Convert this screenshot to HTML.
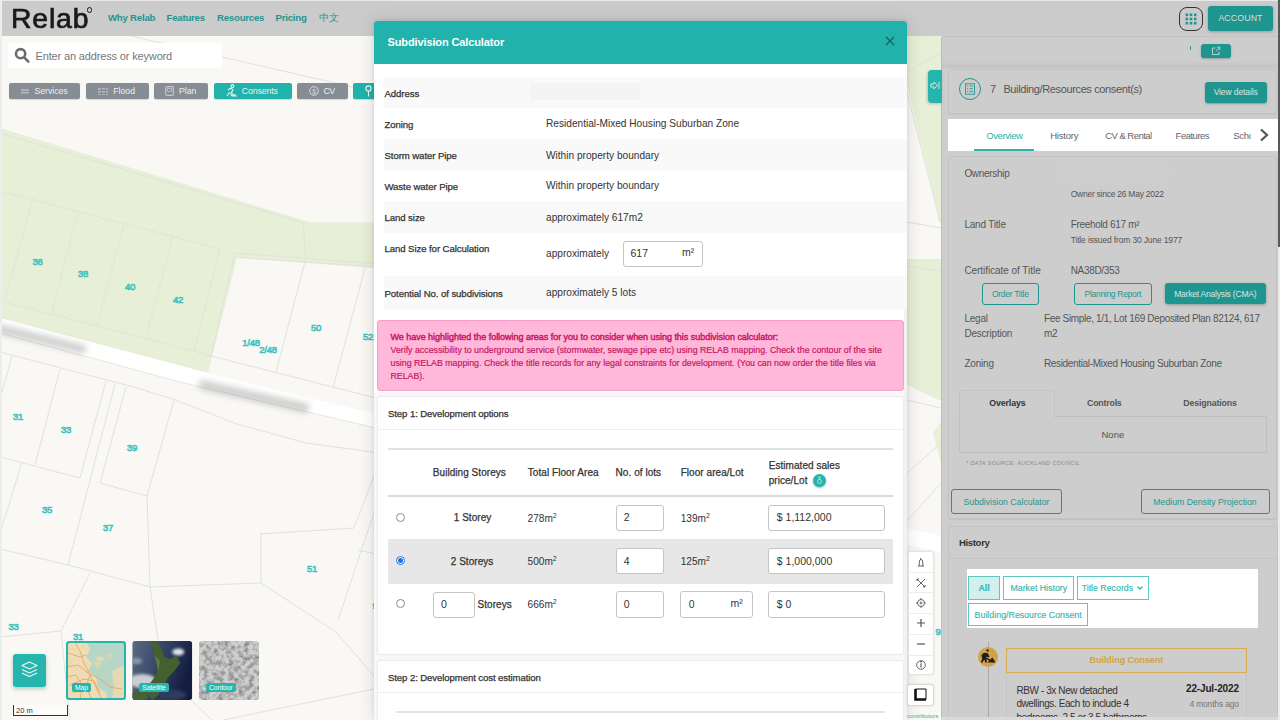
<!DOCTYPE html>
<html><head><meta charset="utf-8">
<style>
*{box-sizing:border-box}
html,body{margin:0;padding:0}
body{width:1280px;height:720px;overflow:hidden;position:relative;background:#f8f7f3;font-family:"Liberation Sans",sans-serif;color:#333}
.a{position:absolute}
.nw{white-space:nowrap}
.fbt{top:83px;height:16px;border-radius:2px;box-shadow:0 1px 1px rgba(0,0,0,0.15)}
.lb{left:384.5px;font-size:9.6px;line-height:13px;color:#333;-webkit-text-stroke:0.25px #333;letter-spacing:-0.08px}
.vl{left:546px;font-size:10.15px;line-height:13px;color:#333}
.vl sup{font-size:7px;vertical-align:0;position:relative;top:-4px}
.inp{background:#fff;border:1px solid #c4c4c4;border-radius:3px}
.card{left:376.5px;width:527px;background:#fff;border:1px solid #ececec;border-radius:3px;box-shadow:0 0 2px rgba(0,0,0,0.06)}
.hd{left:388px;font-size:9.6px;line-height:13px;color:#333;-webkit-text-stroke:0.25px #333;letter-spacing:-0.1px}
.th{font-size:10px;line-height:13px;color:#333;-webkit-text-stroke:0.25px #333;letter-spacing:0.05px}
.rd{left:396px;width:9px;height:9px;border:1px solid #8a8a8a;border-radius:50%;background:#fff}
.tb{top:129px;font-size:9.5px;line-height:13px;color:#666}
.pl{left:964.4px;font-size:10px;line-height:13px;color:#555}
.ps{font-size:8.5px;line-height:12px;color:#555}
.ob{border:1.5px solid #1e968f;border-radius:3px;color:#1e968f;font-size:8px;text-align:center;display:flex;align-items:center;justify-content:center}
.hb{border:1px solid #5fc7c0;color:#3ab5ad;font-size:8.8px;-webkit-text-stroke:0.15px #3ab5ad;text-align:center;display:flex;align-items:center;justify-content:center}
.ml{font-size:9.5px;line-height:10px;color:#c8f0ee;-webkit-text-stroke:0.7px #3cc1bf;transform:translate(-50%,-50%);letter-spacing:-0.3px}
.tl{top:682.5px;height:9.5px;background:#26b5ad;border-radius:2px;color:#fff;font-size:6.8px;line-height:9.5px;text-align:center;letter-spacing:-0.1px}
.fbx{top:84px;font-size:8.7px;line-height:14px;color:#eef0f0}
</style></head><body>

<!-- MAP -->
<svg class="a" style="left:0;top:0" width="1280" height="720" viewBox="0 0 1280 720">
  <rect x="0" y="0" width="1280" height="720" fill="#f9f8f4"/>
  <!-- green area -->
  <polygon points="0,128 311,222.5 600,222.5 600,286 237,257.5 208,373 0,318" fill="#e7efd6"/>
  <polygon points="900,36 945,36 945,222 940,222 907,85 900,70" fill="#e7efd6"/>
  <polygon points="900,259 945,259 945,401 907,384 900,382" fill="#e7efd6"/>
  <polygon points="940,423 933,433 945,478 945,420" fill="#e9f0d6"/>
  <g stroke="#e1e2dc" stroke-width="1" fill="none">
    <line x1="907" y1="72" x2="941" y2="53"/>
    <line x1="907" y1="92" x2="940" y2="222"/>
    <line x1="907" y1="222" x2="941" y2="228"/>
    <line x1="907" y1="266" x2="941" y2="271"/>
    <line x1="907" y1="384" x2="941" y2="400"/>
    <line x1="907" y1="473" x2="941" y2="443"/>
    <line x1="907" y1="521" x2="941" y2="483"/>
    <line x1="907" y1="400" x2="941" y2="408"/>
  </g>
  <g stroke="#e1e2dc" stroke-width="1" fill="none">
    <polyline points="0,133 303,222.5 306,258 276,372"/>
    <polyline points="0,191 220,249 194,351"/>
    <polyline points="0,301 194,351 211,356 380,399"/>
    <line x1="33" y1="198" x2="5" y2="299"/>
    <line x1="78" y1="211" x2="52" y2="313"/>
    <line x1="124" y1="224" x2="97" y2="325"/>
    <line x1="173" y1="237" x2="146" y2="337"/>
    <polyline points="237,257.5 380,267"/>
    <polyline points="235,253 380,264"/>
    <line x1="235" y1="253" x2="211" y2="356"/>
    <line x1="365" y1="268" x2="333" y2="388"/>
    <line x1="131" y1="36" x2="374" y2="92"/>
    <!-- below road -->
    <polyline points="0,352 130,386 173,399 237,424 306,443 380,453"/>
    <line x1="12" y1="356" x2="0" y2="400"/>
    <line x1="60" y1="369" x2="35" y2="465"/>
    <line x1="106" y1="381" x2="80" y2="478"/>
    <line x1="115" y1="384" x2="68" y2="565"/>
    <line x1="126" y1="387" x2="100" y2="483"/>
    <polyline points="174,400 147,496 150,587 158,640"/>
    <polyline points="0,457 80,478"/>
    <polyline points="100,483 147,496"/>
    <line x1="22" y1="462" x2="0" y2="534"/>
    <polyline points="0,549 68,565 150,587 261,583 336,632 374,676"/>
    <polyline points="90,573 61,631 70,720"/>
    <line x1="0" y1="637" x2="61" y2="631"/>
    <polyline points="260,534 354,528 380,460"/>
    <line x1="261" y1="534" x2="261" y2="583"/>
        <line x1="358" y1="550" x2="380" y2="555"/>
    <line x1="380" y1="495" x2="338" y2="620"/>
    <line x1="191" y1="700" x2="212" y2="720"/>
    <line x1="223" y1="720" x2="374" y2="689"/>
  </g>
  <!-- road -->
  <polygon points="0,318 208,373 380,415 960,540 960,556 380,429 180,382 0,333" fill="#ffffff"/>
  <polyline points="0,333 180,382 380,429" fill="none" stroke="#e6e6e1" stroke-width="1"/>
  <g fill="none" stroke="rgba(60,60,60,0.26)" stroke-width="9" stroke-linecap="round" style="filter:blur(3px)">
    <line x1="0" y1="329" x2="82" y2="349"/>
    <line x1="203" y1="385" x2="305" y2="408"/>
  </g>
</svg>

<!-- MAP LABELS -->
<div class="a nw ml" style="left:37.5px;top:262px">36</div>
<div class="a nw ml" style="left:83px;top:274px">38</div>
<div class="a nw ml" style="left:130px;top:286.5px">40</div>
<div class="a nw ml" style="left:178px;top:299.5px">42</div>
<div class="a nw ml" style="left:251px;top:343px">1/48</div>
<div class="a nw ml" style="left:268px;top:350px">2/48</div>
<div class="a nw ml" style="left:316px;top:328px">50</div>
<div class="a nw ml" style="left:368px;top:337px">52</div>
<div class="a nw ml" style="left:18px;top:416.5px">31</div>
<div class="a nw ml" style="left:66px;top:429.5px">33</div>
<div class="a nw ml" style="left:132px;top:447.5px">39</div>
<div class="a nw ml" style="left:47px;top:510px">35</div>
<div class="a nw ml" style="left:108px;top:528px">37</div>
<div class="a nw ml" style="left:312px;top:568.5px">51</div>
<div class="a nw ml" style="left:13.5px;top:626.5px">33</div>
<div class="a nw ml" style="left:78px;top:636.5px">31</div>
<div class="a nw ml" style="left:375px;top:606px">9</div>
<div class="a nw ml" style="left:938px;top:632px">9</div>

<!-- MAP WIDGETS -->
<div class="a" style="left:13px;top:653.5px;width:33px;height:33px;background:#26b5ad;border-radius:3px;box-shadow:0 2px 4px rgba(0,100,100,0.3)"></div>
<svg class="a" style="left:20px;top:660px" width="19" height="19" fill="none" stroke="#e9f7f6" stroke-width="1.2" stroke-linejoin="round"><path d="M9.5 2 L17 5.5 L9.5 9 L2 5.5 Z"/><path d="M2 9.5 L9.5 13 L17 9.5"/><path d="M2 13 L9.5 16.5 L17 13"/></svg>

<svg class="a" style="left:66px;top:640.5px" width="60" height="59" viewBox="0 0 60 59">
 <defs><clipPath id="c1"><rect x="0" y="0" width="60" height="59" rx="3"/></clipPath></defs>
 <g clip-path="url(#c1)">
 <rect width="60" height="59" fill="#b8d6c6"/>
 <path d="M0 0 H20 L24 8 L20 16 L26 22 L22 30 L30 36 L32 46 L40 52 L42 59 H0 Z" fill="#eddcb6"/>
 <path d="M46 30 L60 24 V59 H46 L48 46 Z" fill="#e8d9b2"/>
 <path d="M26 20 L36 22 L32 28 Z M40 14 L46 12 L44 18 Z" fill="#ddd6ae"/>
 <ellipse cx="34" cy="18" rx="4" ry="2.5" fill="#e6d7b0"/>
 <g stroke="#e9a05e" stroke-width="0.9" fill="none" opacity="0.9">
  <path d="M8 0 L14 10 L18 22 L24 34 L30 46 L36 59"/>
  <path d="M0 26 L12 24 L22 32 L34 38 L44 46 L56 48"/>
  <path d="M4 44 L18 38 L28 40 L34 52"/>
  <path d="M2 12 L14 16 L20 14"/>
  <path d="M0 36 L10 34 L16 44 L14 59"/>
  <path d="M24 34 L20 46 L26 59"/>
 </g>
 <g stroke="#f3cf8a" stroke-width="0.7" fill="none">
  <path d="M0 6 L8 8 M4 20 L12 30 M6 52 L20 50 M22 10 L16 4 M46 50 L52 40"/>
 </g>
 </g>
 <rect x="1" y="1" width="58" height="57" rx="2.5" fill="none" stroke="#26b5ad" stroke-width="2"/>
</svg>
<svg class="a" style="left:132px;top:640.5px" width="60.5" height="59" viewBox="0 0 60 59">
 <defs><clipPath id="c2"><rect x="0" y="0" width="60" height="59" rx="3"/></clipPath>
 <linearGradient id="g2" x1="0" y1="0" x2="1" y2="0.3"><stop offset="0" stop-color="#5b6b84"/><stop offset="0.45" stop-color="#39496a"/><stop offset="1" stop-color="#141d3f"/></linearGradient>
 <filter id="bl2"><feGaussianBlur stdDeviation="1.6"/></filter></defs>
 <g clip-path="url(#c2)">
 <rect width="60" height="59" fill="url(#g2)"/>
 <g filter="url(#bl2)">
 <ellipse cx="10" cy="40" rx="14" ry="7" fill="#c9cdd4"/>
 <ellipse cx="4" cy="20" rx="6" ry="3" fill="#8c98aa"/>
 <ellipse cx="46" cy="11" rx="6" ry="3.5" fill="#e3e6ea"/>
 <ellipse cx="40" cy="54" rx="14" ry="5" fill="#2f3d5e"/>
 </g>
 <path d="M18 0 L26 2 L30 10 L32 16 L38 18 L44 14 L48 22 L42 30 L36 36 L32 44 L26 54 L20 59 L14 52 L18 42 L24 34 L26 24 L22 12 Z" fill="#44602f"/>
 <path d="M0 52 L12 48 L16 56 L12 59 H0 Z" fill="#4a6233"/>
 <path d="M22 14 L28 20 L26 30 Z" fill="#5a7a3a"/>
 </g>
</svg>
<svg class="a" style="left:199px;top:640.5px" width="60" height="59" viewBox="0 0 60 59">
 <defs><clipPath id="c3"><rect x="0" y="0" width="60" height="59" rx="3"/></clipPath>
 <filter id="nz" x="0" y="0" width="100%" height="100%"><feTurbulence type="fractalNoise" baseFrequency="0.2" numOctaves="4" seed="7"/><feColorMatrix type="matrix" values="0 0 0 0 0  0 0 0 0 0  0 0 0 0 0  -2.2 0 0 0 1.35"/></filter></defs>
 <g clip-path="url(#c3)"><rect width="60" height="59" fill="#cfcfcf"/><rect width="60" height="59" filter="url(#nz)" fill="#000" opacity="0.4"/></g>
</svg>
<div class="a nw tl" style="left:72px;width:19px">Map</div>
<div class="a nw tl" style="left:139px;width:30px">Satellite</div>
<div class="a nw tl" style="left:205.6px;width:30.4px">Contour</div>
<div class="a" style="left:12.5px;top:705px;width:55px;height:11px;border:1px solid #333;border-top:none;background:rgba(255,255,255,0.5)"></div>
<div class="a nw" style="left:16px;top:706px;font-size:7.5px;line-height:9px;color:#333">20 m</div>

<!-- HEADER -->
<div class="a" style="left:0;top:0;width:1280px;height:36px;background:#cbcbcb;border-top:1px solid #e9e9e9;border-left:2px solid #e9e9e9"></div>
<div class="a nw" style="left:11px;top:2.5px;font-size:27px;line-height:32px;color:#1a1a1a;letter-spacing:0.8px;transform:scaleX(1.05);transform-origin:0 0;-webkit-text-stroke:0.7px #1a1a1a">Relab</div>
<div class="a" style="left:86.5px;top:7px;width:5.5px;height:5.5px;border:1.2px solid #1a1a1a;border-radius:50%"></div>
<div class="a nw" style="left:108px;top:11px;font-size:9.6px;line-height:14px;font-weight:bold;color:#1f958f;letter-spacing:-0.2px">Why Relab</div>
<div class="a nw" style="left:166.5px;top:11px;font-size:9.6px;line-height:14px;font-weight:bold;color:#1f958f;letter-spacing:-0.2px">Features</div>
<div class="a nw" style="left:217px;top:11px;font-size:9.6px;line-height:14px;font-weight:bold;color:#1f958f;letter-spacing:-0.2px">Resources</div>
<div class="a nw" style="left:275.5px;top:11px;font-size:9.6px;line-height:14px;font-weight:bold;color:#1f958f;letter-spacing:-0.2px">Pricing</div>
<div class="a nw" style="left:318.5px;top:11px;font-size:9.6px;line-height:14px;color:#1f958f">中文</div>
<div class="a" style="left:1179px;top:7px;width:24px;height:24px;border:1px solid #333;border-radius:8px"></div>
<svg class="a" style="left:1185px;top:13px" width="12" height="12" viewBox="0 0 12 12" fill="#1e968f">
 <rect x="0.5" y="0.5" width="2.6" height="2.6"/><rect x="4.7" y="0.5" width="2.6" height="2.6"/><rect x="8.9" y="0.5" width="2.6" height="2.6"/>
 <rect x="0.5" y="4.7" width="2.6" height="2.6"/><rect x="4.7" y="4.7" width="2.6" height="2.6"/><rect x="8.9" y="4.7" width="2.6" height="2.6"/>
 <rect x="0.5" y="8.9" width="2.6" height="2.6"/><rect x="4.7" y="8.9" width="2.6" height="2.6"/><rect x="8.9" y="8.9" width="2.6" height="2.6"/>
</svg>
<div class="a nw" style="left:1208px;top:6px;width:65px;height:25px;background:#1e968f;border-radius:3px;box-shadow:0 1px 3px rgba(0,60,60,0.3);color:#d9dddd;font-size:8.8px;line-height:25px;text-align:center;letter-spacing:0.1px">ACCOUNT</div>

<!-- SEARCH -->
<div class="a" style="left:8px;top:43px;width:214px;height:25px;background:#fff;border-radius:2px"></div>
<svg class="a" style="left:14px;top:47px" width="17" height="17" viewBox="0 0 17 17"><circle cx="6.6" cy="6.7" r="4.6" fill="none" stroke="#6c6c6c" stroke-width="2.6"/><line x1="10.2" y1="10.4" x2="14.3" y2="14.6" stroke="#6c6c6c" stroke-width="2.6" stroke-linecap="round"/></svg>
<div class="a nw" style="left:35.5px;top:49px;font-size:11px;line-height:14px;color:#777;letter-spacing:-0.15px">Enter an address or keyword</div>

<!-- FILTER BUTTONS -->
<div class="a fbt" style="left:9px;width:71px;background:#878d94"></div>
<svg class="a" style="left:21px;top:89px" width="8" height="5"><rect x="0" y="0.3" width="8" height="1.5" fill="#b9bdc1"/><rect x="0" y="3" width="8" height="1.5" fill="#b9bdc1"/></svg>
<div class="a nw fbx" style="left:34.4px">Services</div>
<div class="a fbt" style="left:85.5px;width:63px;background:#878d94"></div>
<svg class="a" style="left:98px;top:87.5px" width="10" height="7" fill="#b9bdc1" opacity="0.9"><rect x="0" y="0" width="11" height="1.6"/><rect x="0" y="3" width="11" height="1.6"/><rect x="0" y="6" width="11" height="1.6"/><rect x="3" y="0" width="1" height="8" fill="#878d94"/><rect x="7" y="0" width="1" height="8" fill="#878d94"/></svg>
<div class="a nw fbx" style="left:113.3px">Flood</div>
<div class="a fbt" style="left:154px;width:54px;background:#878d94"></div>
<svg class="a" style="left:165px;top:86px" width="9" height="10"><rect x="0.6" y="0.6" width="7.8" height="8.8" rx="1.5" fill="none" stroke="#c5c8cb" stroke-width="1.1"/><rect x="2.6" y="2.4" width="3.8" height="3" fill="none" stroke="#c5c8cb" stroke-width="0.8"/></svg>
<div class="a nw fbx" style="left:179px">Plan</div>
<div class="a fbt" style="left:214px;width:78px;background:#22b2ac"></div>
<svg class="a" style="left:226px;top:84px" width="11" height="13" fill="none" stroke="#e8f6f5" stroke-width="1.1"><circle cx="6.5" cy="2" r="1.4"/><path d="M2 6 l3-2 l2 2 l-2 3 M1 12 l2-3 h3 l2 3 M5 10 a2 2 0 1 0 4 0 M8 12 h3"/></svg>
<div class="a nw fbx" style="left:241.8px;letter-spacing:-0.1px">Consents</div>
<div class="a fbt" style="left:297px;width:51px;background:#878d94"></div>
<svg class="a" style="left:309px;top:86px" width="10" height="10"><circle cx="5" cy="5" r="4.3" fill="none" stroke="#d9dadb" stroke-width="1"/><text x="5" y="7.6" font-size="6.5" text-anchor="middle" fill="#d9dadb" font-family="Liberation Sans">$</text></svg>
<div class="a nw fbx" style="left:323.5px;letter-spacing:-0.5px">CV</div>
<div class="a fbt" style="left:353px;width:40px;background:#22b2ac"></div>
<svg class="a" style="left:365px;top:85px" width="7" height="12" fill="none" stroke="#e8f6f5" stroke-width="1.1"><circle cx="3.5" cy="3.5" r="2.6"/><line x1="3.5" y1="6.1" x2="3.5" y2="11.5"/></svg>

<div class="a" style="left:0;top:0;width:2px;height:720px;background:#eceeee"></div>
<!-- MODAL -->
<div class="a" style="left:374px;top:21px;width:533px;height:699px;background:#fff;border-radius:3px 3px 0 0;box-shadow:0 0 4px rgba(0,0,0,0.1),0 0 18px rgba(0,0,0,0.12)"></div>
<div class="a" style="left:374px;top:21px;width:533px;height:43px;background:#22b2ac;border-radius:3px 3px 0 0"></div>
<div class="a nw" style="left:387.5px;top:35px;font-size:11px;line-height:14px;font-weight:bold;color:#fff;letter-spacing:-0.12px">Subdivision Calculator</div>
<svg class="a" style="left:884.5px;top:36px" width="10" height="10"><path d="M1 1 L9 9 M9 1 L1 9" stroke="#1d5a56" stroke-width="1.1"/></svg>

<!-- info rows -->
<div class="a" style="left:384px;top:77px;width:523px;height:31px;background:#f9f9f9"></div>
<div class="a" style="left:530px;top:83px;width:110px;height:17px;background:#f4f4f4;border-radius:2px"></div>
<div class="a" style="left:384px;top:139px;width:523px;height:31px;background:#f9f9f9"></div>
<div class="a" style="left:384px;top:201px;width:523px;height:32px;background:#f9f9f9"></div>
<div class="a" style="left:384px;top:276px;width:523px;height:34px;background:#f9f9f9"></div>
<div class="a nw lb" style="top:87px">Address</div>
<div class="a nw lb" style="top:118px">Zoning</div>
<div class="a nw lb" style="top:149px">Storm water Pipe</div>
<div class="a nw lb" style="top:180px">Waste water Pipe</div>
<div class="a nw lb" style="top:211px">Land size</div>
<div class="a nw lb" style="top:242px">Land Size for Calculation</div>
<div class="a nw lb" style="top:287px">Potential No. of subdivisions</div>
<div class="a nw vl" style="top:117px">Residential-Mixed Housing Suburban Zone</div>
<div class="a nw vl" style="top:148.5px">Within property boundary</div>
<div class="a nw vl" style="top:179px">Within property boundary</div>
<div class="a nw vl" style="top:210.5px">approximately 617m2</div>
<div class="a nw vl" style="top:247px">approximately</div>
<div class="a inp" style="left:623px;top:241px;width:80px;height:26px"></div>
<div class="a nw vl" style="left:630.5px;top:247px;font-size:10.5px">617</div>
<div class="a nw vl" style="left:682px;top:246px;font-size:10.5px">m²</div>
<div class="a nw vl" style="top:286px">approximately 5 lots</div>

<!-- warning -->
<div class="a" style="left:376.5px;top:319.5px;width:527.5px;height:71px;background:#ffb8da;border:1px solid #f79dc7;border-radius:3px"></div>
<div class="a nw" style="left:390.5px;top:330.5px;font-size:8.8px;line-height:13px;color:#c8155f;-webkit-text-stroke:0.18px #c8155f">
<div style="font-size:9px;-webkit-text-stroke:0.42px #c8155f;letter-spacing:-0.03px">We have highlighted the following areas for you to consider when using this subdivision calculator:</div>
<div>Verify accessibility to underground service (stormwater, sewage pipe etc) using RELAB mapping. Check the contour of the site</div>
<div>using RELAB mapping. Check the title records for any legal constraints for development. (You can now order the title files via</div>
<div>RELAB).</div>
</div>

<!-- step 1 card -->
<div class="a" style="left:374px;top:392px;width:530px;height:328px;background:#f7f8f8"></div>
<div class="a card" style="top:396px;height:259px"></div>
<div class="a" style="left:377.5px;top:429px;width:525.5px;height:1px;background:#eeeeee"></div>
<div class="a nw hd" style="top:407px">Step 1: Development options</div>
<div class="a" style="left:388px;top:448px;width:505px;height:2px;background:#dde2e2"></div>
<div class="a" style="left:388px;top:495px;width:505px;height:2px;background:#d6dcdc"></div>
<div class="a nw th" style="left:432.8px;top:466px">Building Storeys</div>
<div class="a nw th" style="left:527.8px;top:466px">Total Floor Area</div>
<div class="a nw th" style="left:615.6px;top:466px">No. of lots</div>
<div class="a nw th" style="left:680.7px;top:466px">Floor area/Lot</div>
<div class="a nw th" style="left:768.7px;top:458.5px">Estimated sales</div>
<div class="a nw th" style="left:768.7px;top:473.5px">price/Lot</div>
<div class="a" style="left:813px;top:473.5px;width:13px;height:13px;border-radius:50%;background:#26b5ad;box-shadow:0 1px 2px rgba(0,80,80,0.4)"></div>
<svg class="a" style="left:816px;top:476px" width="7" height="8" fill="none" stroke="#bfe9e6" stroke-width="0.8"><circle cx="3.5" cy="1.5" r="0.9"/><rect x="1.8" y="3.5" width="3.4" height="3.8" rx="1"/></svg>

<div class="a" style="left:388px;top:539px;width:505px;height:44.5px;background:#e7e7e7"></div>
<div class="a rd" style="top:512.5px"></div>
<div class="a rd" style="top:556px;border-color:#1a73e8"><div style="position:absolute;left:1.1px;top:1.1px;width:5px;height:5px;border-radius:50%;background:#1a6ff0"></div></div>
<div class="a rd" style="top:599px"></div>

<div class="a nw th" style="left:453.7px;top:511px">1 Storey</div>
<div class="a nw th" style="left:450.7px;top:554.5px">2 Storeys</div>
<div class="a inp" style="left:433px;top:591.5px;width:41.5px;height:26px"></div>
<div class="a nw vl" style="left:441px;top:597.5px;font-size:10.5px">0</div>
<div class="a nw th" style="left:477.5px;top:598px">Storeys</div>

<div class="a nw vl" style="left:527.5px;top:511.5px">278m<sup>2</sup></div>
<div class="a nw vl" style="left:527.5px;top:555px">500m<sup>2</sup></div>
<div class="a nw vl" style="left:527.5px;top:598px">666m<sup>2</sup></div>

<div class="a inp" style="left:615.7px;top:504.7px;width:48.5px;height:26.6px"></div>
<div class="a inp" style="left:615.7px;top:548.3px;width:48.5px;height:26.1px"></div>
<div class="a inp" style="left:615.7px;top:591.4px;width:48.5px;height:26.6px"></div>
<div class="a nw vl" style="left:623.7px;top:511px;font-size:10.5px">2</div>
<div class="a nw vl" style="left:623.7px;top:554.5px;font-size:10.5px">4</div>
<div class="a nw vl" style="left:623.7px;top:597.5px;font-size:10.5px">0</div>

<div class="a nw vl" style="left:680.7px;top:511.5px">139m<sup>2</sup></div>
<div class="a nw vl" style="left:680.7px;top:555px">125m<sup>2</sup></div>
<div class="a inp" style="left:680.4px;top:591.4px;width:72.2px;height:26.6px"></div>
<div class="a nw vl" style="left:688.7px;top:597.5px;font-size:10.5px">0</div>
<div class="a nw vl" style="left:730.5px;top:597px;font-size:10.5px">m²</div>

<div class="a inp" style="left:768.3px;top:504.7px;width:116.3px;height:26.6px"></div>
<div class="a inp" style="left:768.3px;top:548.3px;width:116.3px;height:26.1px"></div>
<div class="a inp" style="left:768.3px;top:591.4px;width:116.3px;height:26.6px"></div>
<div class="a nw vl" style="left:776.8px;top:511px;font-size:10.5px">$ 1,112,000</div>
<div class="a nw vl" style="left:776.8px;top:554.5px;font-size:10.5px">$ 1,000,000</div>
<div class="a nw vl" style="left:776.8px;top:597.5px;font-size:10.5px">$ 0</div>

<!-- step 2 card -->
<div class="a card" style="top:660px;height:70px"></div>
<div class="a" style="left:377.5px;top:692px;width:525.5px;height:1px;background:#eeeeee"></div>
<div class="a nw hd" style="top:670.5px">Step 2: Development cost estimation</div>
<div class="a" style="left:396px;top:711px;width:489px;height:2px;background:#e2e6e6"></div>
<div class="a" style="left:904px;top:310px;width:3px;height:410px;background:#f1f2f2"></div>

<!-- RIGHT PANEL -->
<div class="a" style="left:941px;top:36px;width:339px;height:684px;background:#cdcdcd;border-left:1px solid #bdbdbd;border-top:1px solid #c2c2c2;border-radius:3px 0 0 0"></div>
<div class="a" style="left:942px;top:60px;width:336px;height:8px;background:linear-gradient(rgba(0,0,0,0),rgba(0,0,0,0.05))"></div>
<div class="a" style="left:1190px;top:46px;width:1px;height:4px;background:#2a9c96"></div>
<div class="a" style="left:1201px;top:44px;width:30px;height:13.5px;background:#1e968f;border-radius:3px;box-shadow:0 1px 2px rgba(0,60,60,0.3)"></div>
<svg class="a" style="left:1211px;top:45.5px" width="10" height="10" fill="none" stroke="#b9dcda" stroke-width="0.9"><path d="M4.5 2 H1.5 V8.5 H8 V5.5 M5 5 L8.8 1.2 M6 1.2 H8.8 V4"/></svg>

<!-- consents card -->
<div class="a" style="left:948px;top:68.5px;width:329px;height:45.5px;border:1px solid #c3c3c3;border-radius:3px;box-shadow:0 1px 1px rgba(0,0,0,0.05)"></div>
<div class="a" style="left:959px;top:78px;width:22px;height:22px;border:1.8px solid #1e968f;border-radius:50%"></div>
<svg class="a" style="left:964px;top:83px" width="12" height="12" fill="none" stroke="#1e968f" stroke-width="0.9"><rect x="1.5" y="0.8" width="9" height="10.4"/><path d="M3 3 h1.2 M5.5 3 h3.5 M3 5.8 h1.2 M5.5 5.8 h3.5 M3 8.6 h1.2 M5.5 8.6 h3.5"/></svg>
<div class="a nw" style="left:990px;top:81.5px;font-size:11px;line-height:14px;color:#555">7</div>
<div class="a nw" style="left:1003.4px;top:81.5px;font-size:11px;line-height:14px;color:#555;letter-spacing:-0.37px">Building/Resources consent(s)</div>
<div class="a nw" style="left:1204.6px;top:82.3px;width:62px;height:21px;background:#1e968f;border-radius:3px;box-shadow:0 1px 2px rgba(0,60,60,0.35);color:#d5e6e5;font-size:8.6px;line-height:21px;text-align:center;letter-spacing:-0.15px">View details</div>

<!-- tabs -->
<div class="a" style="left:948px;top:118.7px;width:330px;height:32.3px;background:#fff"></div>
<div class="a nw tb" style="left:986.2px;color:#2ab3ab;letter-spacing:-0.4px">Overview</div>
<div class="a nw tb" style="left:1050.2px;letter-spacing:-0.2px">History</div>
<div class="a nw tb" style="left:1105.3px;letter-spacing:-0.55px">CV &amp; Rental</div>
<div class="a nw tb" style="left:1175.6px;letter-spacing:-0.5px">Features</div>
<div class="a nw tb" style="left:1233.2px;width:18px;overflow:hidden;letter-spacing:-0.3px">School</div>
<svg class="a" style="left:1259px;top:128px" width="10" height="14" fill="none" stroke="#555" stroke-width="2.2"><path d="M2 1.5 L8 7 L2 12.5"/></svg>
<div class="a" style="left:974px;top:149px;width:60.4px;height:2px;background:#2ab3ab"></div>

<!-- overview card -->
<div class="a" style="left:948px;top:155.6px;width:329px;height:363px;border:1px solid #c3c3c3;border-radius:3px;box-shadow:0 1px 1px rgba(0,0,0,0.06)"></div>
<div class="a" style="left:1058px;top:165px;width:112px;height:15px;background:#cecece"></div>
<div class="a nw pl" style="top:166.5px;letter-spacing:-0.3px">Ownership</div>
<div class="a nw pl" style="top:217.5px;letter-spacing:-0.2px">Land Title</div>
<div class="a nw pl" style="top:263.5px;letter-spacing:-0.05px">Certificate of Title</div>
<div class="a nw pl" style="top:312px;letter-spacing:-0.2px">Legal</div>
<div class="a nw pl" style="top:326.5px;letter-spacing:-0.2px">Description</div>
<div class="a nw pl" style="top:357px;letter-spacing:-0.2px">Zoning</div>
<div class="a nw ps" style="left:1070.7px;top:187.5px;letter-spacing:-0.25px">Owner since 26 May 2022</div>
<div class="a nw pl" style="left:1070.7px;top:218px;letter-spacing:-0.32px">Freehold 617 m²</div>
<div class="a nw ps" style="left:1070.7px;top:234px;letter-spacing:-0.15px">Title issued from 30 June 1977</div>
<div class="a nw pl" style="left:1070.7px;top:264px;letter-spacing:-0.31px">NA38D/353</div>
<div class="a nw ob" style="left:981.8px;top:283.3px;width:57px;height:21.6px;font-size:8.5px;letter-spacing:-0.27px">Order Title</div>
<div class="a nw ob" style="left:1073.8px;top:283px;width:78px;height:22px;font-size:8.5px;letter-spacing:-0.3px">Planning Report</div>
<div class="a nw" style="left:1164.5px;top:283px;width:101.5px;height:20.5px;background:#1e968f;border-radius:3px;box-shadow:0 1px 3px rgba(0,60,60,0.35);color:#d5e6e5;font-size:8.5px;line-height:22px;text-align:center;letter-spacing:-0.2px">Market Analysis (CMA)</div>
<div class="a nw pl" style="left:1043.9px;top:311.5px;letter-spacing:-0.33px">Fee Simple, 1/1, Lot 169 Deposited Plan 82124, 617</div>
<div class="a nw pl" style="left:1043.9px;top:326.5px;letter-spacing:-0.2px">m2</div>
<div class="a nw pl" style="left:1043.9px;top:357px;letter-spacing:-0.33px">Residential-Mixed Housing Suburban Zone</div>

<div class="a" style="left:959.4px;top:416px;width:307.5px;height:37.3px;border:1px solid #bfbfbf"></div>
<div class="a" style="left:959.4px;top:390px;width:96px;height:27px;border:1px solid #c3c3c3;border-bottom:none;border-radius:3px 3px 0 0;background:#cdcdcd"></div>
<div class="a nw" style="left:959.4px;top:397px;width:96px;text-align:center;font-size:8.8px;line-height:12px;font-weight:bold;color:#333;letter-spacing:-0.1px">Overlays</div>
<div class="a nw" style="left:1087px;top:397px;font-size:8.8px;line-height:12px;font-weight:bold;color:#555;letter-spacing:-0.2px">Controls</div>
<div class="a nw" style="left:1183.2px;top:397px;font-size:8.8px;line-height:12px;font-weight:bold;color:#555;letter-spacing:-0.13px">Designations</div>
<div class="a nw" style="left:1101.5px;top:428.5px;font-size:9.5px;line-height:12px;color:#555">None</div>
<div class="a nw" style="left:966px;top:459px;font-size:5.6px;line-height:8px;font-style:italic;color:#8a8a8a;letter-spacing:0.35px">* DATA SOURCE: AUCKLAND COUNCIL</div>
<div class="a nw ob" style="left:950.8px;top:489.4px;width:111.4px;height:24.6px;font-size:8.7px">Subdivision Calculator</div>
<div class="a nw ob" style="left:1140.5px;top:489.4px;width:129px;height:24.6px;font-size:8.7px">Medium Density Projection</div>

<!-- history card -->
<div class="a" style="left:948px;top:526px;width:330px;height:200px;border:1px solid #c3c3c3;border-radius:3px"></div>
<div class="a" style="left:948px;top:558px;width:330px;height:1px;background:#c3c3c3"></div>
<div class="a nw" style="left:958.9px;top:536px;font-size:9.6px;line-height:13px;font-weight:bold;color:#333;letter-spacing:-0.35px">History</div>
<div class="a" style="left:967.2px;top:569.4px;width:291px;height:58.4px;background:#fff"></div>
<div class="a nw hb" style="left:968.3px;top:576.4px;width:31.7px;height:23.6px;background:#d3efed;font-weight:bold">All</div>
<div class="a nw hb" style="left:1003.3px;top:576.4px;width:71px;height:23.6px">Market History</div>
<div class="a nw hb" style="left:1077.2px;top:576.4px;width:71.4px;height:23.6px">Title Records<svg width="8" height="6" style="margin-left:3px" fill="none" stroke="#3ab5ad" stroke-width="1.3"><path d="M1.5 1.5 L4 4 L6.5 1.5"/></svg></div>
<div class="a nw hb" style="left:968.3px;top:602.8px;width:119.7px;height:23.6px;letter-spacing:0.02px">Building/Resource Consent</div>
<div class="a" style="left:987.5px;top:642px;width:1px;height:80px;background:#a9a9a9"></div>
<div class="a" style="left:977.8px;top:647px;width:20px;height:20px;border-radius:50%;background:#d1a346"></div>
<svg class="a" style="left:977.8px;top:647px" width="20" height="20" viewBox="0 0 20 20" fill="#1d1d1d"><circle cx="9.6" cy="3.4" r="1.2"/><path d="M3.4 8.6 C4.2 5.8 7.8 4.8 10 6.4 L11.4 9.6 L10.6 10.6 L8.6 9.8 L8.2 11.2 L8.9 15.5 L7.3 15.5 L6.2 12.2 L4.6 15.5 L2.9 15.5 L4.3 11.2 Z"/><path d="M4.6 9.6 L12.4 13.4" stroke="#1d1d1d" stroke-width="1.3"/><path d="M9.4 15.6 L14.4 10.4 L17.6 15.6 Z"/></svg>
<div class="a" style="left:1005.6px;top:647.8px;width:241.6px;height:25.5px;border:1px solid #d6ad55"></div>
<div class="a nw" style="left:1005.6px;top:654px;width:241.6px;text-align:center;font-size:9.1px;line-height:13px;font-weight:bold;color:#d1a346;letter-spacing:-0.1px">Building Consent</div>
<div class="a" style="left:1005.6px;top:673.3px;width:241.6px;height:50px;border:1px solid #c3c3c3;border-top:none"></div>
<div class="a nw" style="left:1016.4px;top:683.5px;font-size:10px;line-height:13.5px;color:#333;letter-spacing:-0.4px">RBW - 3x New detached<br>dwellings. Each to include 4<br>bedrooms, 2.5 or 3.5 bathrooms</div>
<div class="a nw" style="left:1186px;top:682px;font-size:10px;line-height:13px;font-weight:bold;color:#222;letter-spacing:-0.15px">22-Jul-2022</div>
<div class="a nw" style="left:1189.4px;top:697.5px;font-size:8.5px;line-height:12px;color:#777;letter-spacing:-0.17px">4 months ago</div>
<div class="a" style="left:941px;top:717px;width:339px;height:3px;background:#d9d9d9"></div>

<div class="a" style="left:1278px;top:0;width:2px;height:247px;background:#585858"></div>
<div class="a" style="left:1278px;top:247px;width:2px;height:473px;background:#ebebeb"></div>
<!-- collapse tab -->
<div class="a" style="left:928px;top:69.5px;width:14px;height:33px;background:#26b5ad;border-radius:4px 0 0 4px;box-shadow:-1px 1px 3px rgba(0,0,0,0.2)"></div>
<svg class="a" style="left:930px;top:81px" width="10" height="9" fill="none" stroke="#d6f1ef" stroke-width="0.9"><path d="M0.8 3 H4 V1 L7.5 4.5 L4 8 V6 H0.8 Z M9 1 V8"/></svg>

<!-- map controls -->
<div class="a" style="left:907.5px;top:551px;width:26.5px;height:124px;background:#fff;border:1px solid #e4e4e4;border-radius:3px;box-shadow:0 0 2px rgba(0,0,0,0.12)"></div>
<div class="a" style="left:908px;top:571.5px;width:26px;height:1px;background:#ececec"></div>
<div class="a" style="left:908px;top:592px;width:26px;height:1px;background:#ececec"></div>
<div class="a" style="left:908px;top:613px;width:26px;height:1px;background:#ececec"></div>
<div class="a" style="left:908px;top:634px;width:26px;height:1px;background:#ececec"></div>
<div class="a" style="left:908px;top:654.5px;width:26px;height:1px;background:#ececec"></div>
<svg class="a" style="left:914px;top:555px" width="14" height="116" fill="none" stroke="#555" stroke-width="0.9">
 <path d="M4 11 H10 M5 11 L5.5 6 A1.5 1.5 0 0 1 8.5 6 L9 11 M6.5 4 V3"/>
 <path d="M3 24 L11 32 M11 24 L3 32 M3 24 h2 M3 24 v2 M11 32 h-2 M11 32 v-2"/>
 <circle cx="7" cy="48" r="3.5"/><circle cx="7" cy="48" r="1"/><path d="M7 43 v1.5 M7 51.5 v1.5 M2 48 h1.5 M10.5 48 h1.5"/>
 <path d="M7 64 v8 M3 68 h8" stroke-width="1.2"/>
 <path d="M3 89 h8" stroke-width="1.2"/>
 <circle cx="7" cy="110" r="4.3"/><path d="M7 108.5 v4" stroke-width="1.1"/><circle cx="7" cy="106.8" r="0.5" fill="#555"/>
</svg>
<div class="a" style="left:907px;top:684px;width:27px;height:22px;background:#fff;border:1px solid #d8d8d8;border-radius:3px;box-shadow:0 0 2px rgba(0,0,0,0.15)"></div>
<svg class="a" style="left:914px;top:688px" width="13" height="13" fill="none" stroke="#111"><path d="M1.5 1 V11.5 H12" stroke-width="2.6"/><path d="M1.5 1 H12 V11.5" stroke-width="1"/></svg>
<div class="a nw" style="left:907px;top:712px;font-size:6px;line-height:8px;color:#2bb3ab">contributors</div>

</body></html>
